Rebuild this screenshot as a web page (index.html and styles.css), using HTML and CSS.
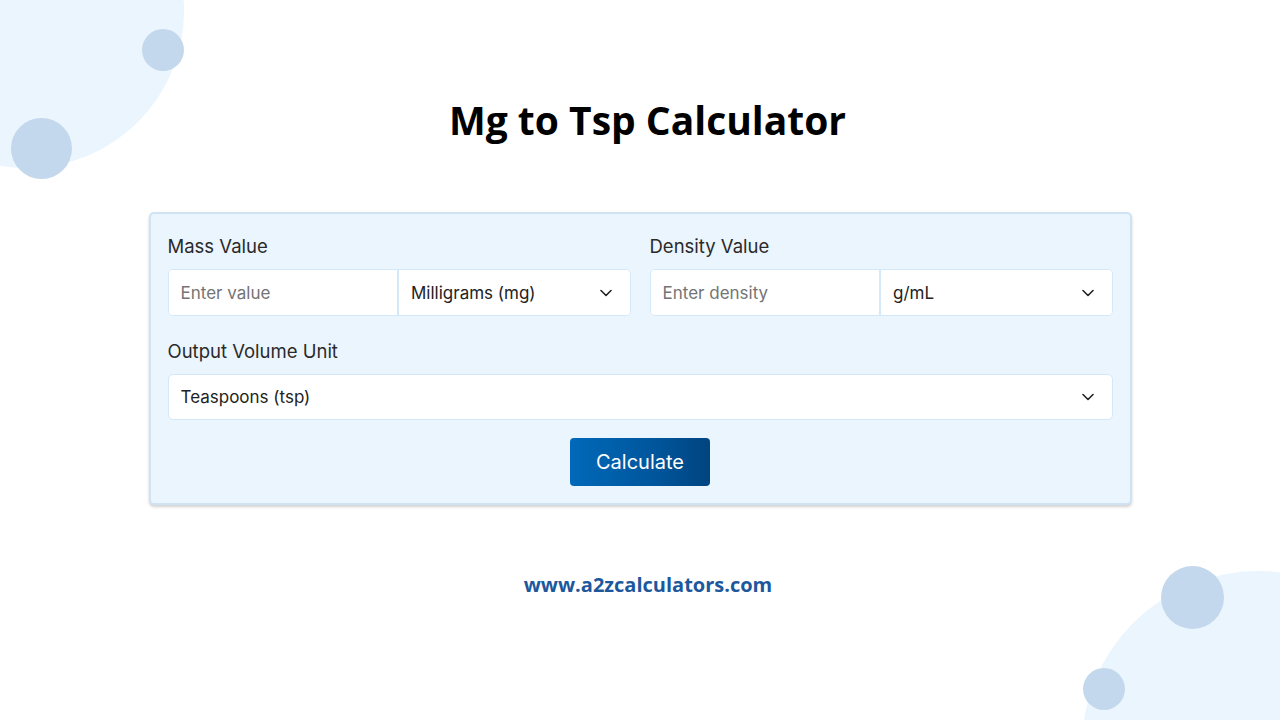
FILE: index.html
```html
<!DOCTYPE html>
<html lang="en">
<head>
<meta charset="utf-8">
<title>Mg to Tsp Calculator</title>
<link rel="stylesheet" href="styles.css">
</head>
<body>
<div class="page">
  <div class="deco deco-tl-big"></div>
  <div class="deco deco-tl-a"></div>
  <div class="deco deco-tl-b"></div>
  <div class="deco deco-br-big"></div>
  <div class="deco deco-br-a"></div>
  <div class="deco deco-br-b"></div>

  <main class="content">
    <h1 class="title">Mg to Tsp Calculator</h1>

    <section class="card">
      <div class="row two">
        <div class="field">
          <label class="label">Mass Value</label>
          <div class="group">
            <input class="input" type="text" placeholder="Enter value">
            <div class="select">
              <span>Milligrams (mg)</span>
              <svg class="chev" viewBox="0 0 12 8" width="12" height="8"><path d="M1 1.5 L6 6.5 L11 1.5" fill="none" stroke="#222" stroke-width="1.6" stroke-linecap="round" stroke-linejoin="round"/></svg>
            </div>
          </div>
        </div>
        <div class="field">
          <label class="label">Density Value</label>
          <div class="group">
            <input class="input" type="text" placeholder="Enter density">
            <div class="select">
              <span>g/mL</span>
              <svg class="chev" viewBox="0 0 12 8" width="12" height="8"><path d="M1 1.5 L6 6.5 L11 1.5" fill="none" stroke="#222" stroke-width="1.6" stroke-linecap="round" stroke-linejoin="round"/></svg>
            </div>
          </div>
        </div>
      </div>

      <div class="field field-out">
        <label class="label">Output Volume Unit</label>
        <div class="select select-full">
          <span>Teaspoons (tsp)</span>
          <svg class="chev" viewBox="0 0 12 8" width="12" height="8"><path d="M1 1.5 L6 6.5 L11 1.5" fill="none" stroke="#222" stroke-width="1.6" stroke-linecap="round" stroke-linejoin="round"/></svg>
        </div>
      </div>

      <div class="actions">
        <button class="btn" type="button">Calculate</button>
      </div>
    </section>

    <p class="footer">www.a2zcalculators.com</p>
  </main>
</div>
</body>
</html>
```

FILE: styles.css
```css
* { box-sizing: border-box; }

html, body {
  margin: 0;
  padding: 0;
  background: #ffffff;
}

.page {
  position: relative;
  width: 1280px;
  height: 720px;
  overflow: hidden;
  background: #ffffff;
  font-family: Inter, "Noto Sans", sans-serif;
}

.deco {
  position: absolute;
  border-radius: 50%;
  z-index: 0;
}

.deco-tl-big {
  width: 314px;
  height: 314px;
  left: -130px;
  top: -146px;
  background: #ebf5fe;
}

.deco-tl-a {
  width: 42px;
  height: 42px;
  left: 142px;
  top: 29px;
  background: #c3d8ec;
}

.deco-tl-b {
  width: 61px;
  height: 61px;
  left: 11px;
  top: 118px;
  background: #c3d8ec;
}

.deco-br-big {
  width: 352px;
  height: 352px;
  left: 1082px;
  top: 571px;
  background: #ebf5fe;
}

.deco-br-a {
  width: 63px;
  height: 63px;
  left: 1161px;
  top: 566px;
  background: #c3d8ec;
}

.deco-br-b {
  width: 42px;
  height: 42px;
  left: 1083px;
  top: 668px;
  background: #c3d8ec;
}

.content {
  position: relative;
  z-index: 1;
  display: flex;
  flex-direction: column;
  align-items: center;
  padding-top: 96px;
}

.title {
  margin: 0 0 0 15px;
  font-family: "Open Sans", "Noto Sans", sans-serif;
  font-weight: 700;
  font-size: 39px;
  line-height: 48px;
  color: #000;
  letter-spacing: 0;
}

.card {
  margin-top: 68px;
  width: 983px;
  background: #ebf5fe;
  border: 2px solid #cfe3f4;
  border-radius: 5px;
  box-shadow: 0 2px 3px rgba(0, 0, 0, 0.18);
  padding: 21px 17px 17px;
}

.row.two {
  display: grid;
  grid-template-columns: 1fr 1fr;
  column-gap: 19px;
}

.field {
  display: flex;
  flex-direction: column;
}

.field-out {
  margin-top: 24px;
}

.label {
  font-size: 18.5px;
  line-height: 22px;
  color: #2a2a2a;
  margin-bottom: 12px;
}

.group {
  display: flex;
  height: 47px;
  background: #fff;
  border: 1px solid #d5e8f7;
  border-radius: 5px;
  overflow: hidden;
}

.input {
  width: 50%;
  border: 0;
  border-right: 2px solid #d5e8f7;
  outline: none;
  padding: 0 12px;
  font-family: Inter, "Noto Sans", sans-serif;
  font-size: 17px;
  color: #222;
  background: #fff;
}

.input::placeholder {
  color: #747474;
}

.select {
  flex: 1;
  display: flex;
  align-items: center;
  justify-content: space-between;
  padding: 0 18px 0 12px;
  font-size: 17px;
  color: #222;
  background: #fff;
}

.select-full {
  flex: none;
  height: 46px;
  border: 1px solid #d5e8f7;
  border-radius: 5px;
}

.chev {
  display: block;
}

.actions {
  display: flex;
  justify-content: center;
  margin-top: 18px;
}

.btn {
  width: 140px;
  height: 48px;
  border: 0;
  border-radius: 4px;
  background: linear-gradient(90deg, #0069b9 0%, #00569c 60%, #004480 100%);
  color: #fff;
  font-family: Inter, "Noto Sans", sans-serif;
  font-size: 20px;
  line-height: 48px;
  padding: 0;
  cursor: pointer;
}

.footer {
  margin: 66px 0 0 16px;
  font-family: "Open Sans", "Noto Sans", sans-serif;
  font-weight: 700;
  font-size: 20px;
  line-height: 28px;
  color: #1d589d;
}
```
